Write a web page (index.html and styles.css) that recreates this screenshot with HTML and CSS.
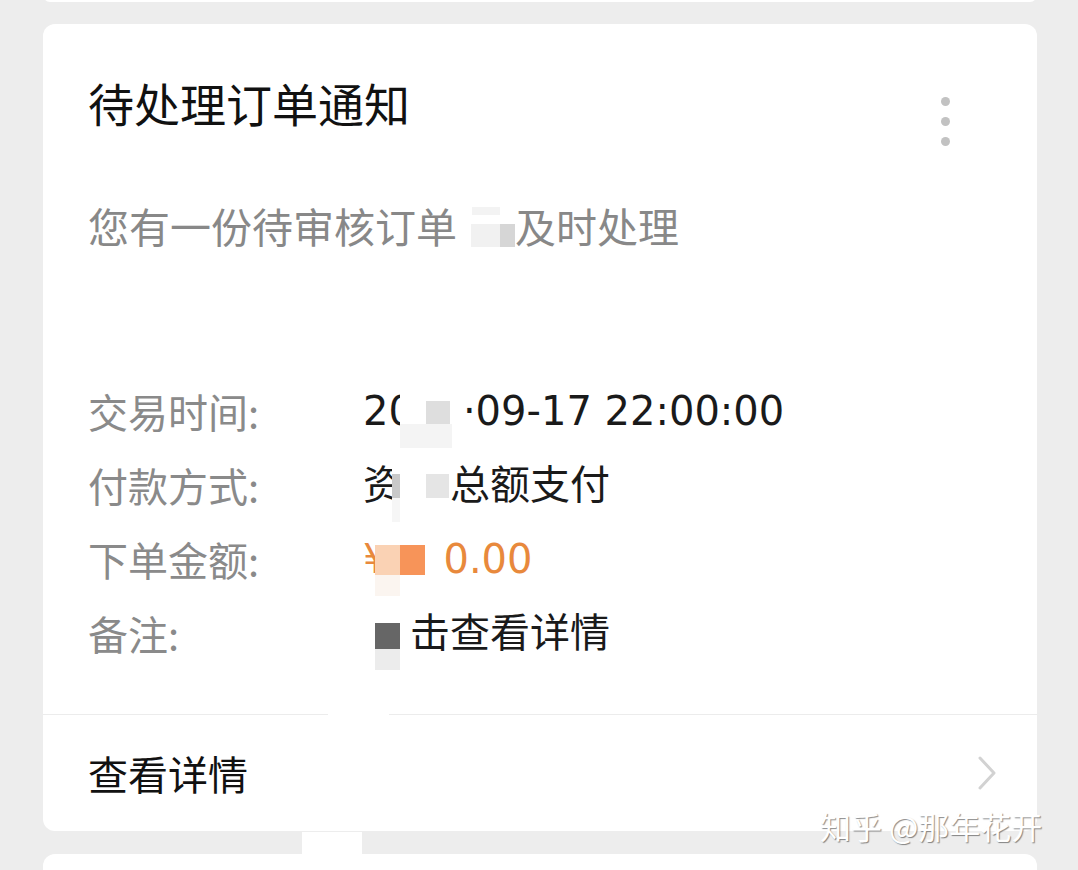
FILE: index.html
```html
<!DOCTYPE html>
<html lang="zh-CN">
<head>
    <meta charset="UTF-8">
    <meta name="viewport" content="width=device-width, initial-scale=1.0">
    <title>待处理订单通知</title>
    <link rel="stylesheet" href="styles.css">
</head>
<body>
    <div class="page">
        <div class="card card-prev"></div>

        <div class="card notice">
            <div class="notice-main">
                <div class="notice-head">
                    <h2 class="notice-title">待处理订单通知</h2>
                    <div class="more"><span></span><span></span><span></span></div>
                </div>
                <p class="notice-desc">您有一份待审核订单<span class="mask mask-desc"></span>及时处理</p>
                <div class="fields">
                    <div class="field">
                        <span class="field-label">交易时间:</span>
                        <span class="field-value">20<span class="mask mask-date"></span>·09-17 22:00:00</span>
                    </div>
                    <div class="field">
                        <span class="field-label">付款方式:</span>
                        <span class="field-value">资<span class="mask mask-pay"></span>总额支付</span>
                    </div>
                    <div class="field">
                        <span class="field-label">下单金额:</span>
                        <span class="field-value amount">¥<span class="mask mask-amount"></span>0.00</span>
                    </div>
                    <div class="field">
                        <span class="field-label">备注:</span>
                        <span class="field-value"><span class="mask mask-note"></span>击查看详情</span>
                    </div>
                </div>
            </div>
            <div class="notice-foot">
                <span>查看详情</span>
                <svg class="chevron" width="20" height="36" viewBox="0 0 20 36">
                    <path d="M3 3 L17 18 L3 33" fill="none" stroke="#d2d2d2" stroke-width="3" stroke-linecap="round" stroke-linejoin="round"/>
                </svg>
            </div>
        </div>

        <div class="card card-next"></div>

        <div class="smear"></div>
        <div class="watermark">知乎 @那年花开</div>
    </div>
</body>
</html>
```

FILE: styles.css
```css
body {
    margin: 0;
    background-color: #ededed;
    font-family: "Noto Sans CJK SC", sans-serif;
}
.page {
    position: relative;
    width: 1078px;
    height: 870px;
    overflow: hidden;
}
.card {
    background-color: #fff;
    margin: 0 41px 0 43px;
    border-radius: 12px;
}
.card-prev {
    height: 14px;
    margin-top: -12px;
}
.notice {
    margin-top: 22px;
}
.card-next {
    margin-top: 23px;
    height: 100px;
}
.notice-main {
    padding: 48px 45px 43px;
}
.notice-head {
    display: flex;
    justify-content: space-between;
    align-items: flex-start;
    height: 60px;
}
.notice-title {
    margin: 0;
    font-size: 46px;
    line-height: 60px;
    font-weight: 400;
    color: #111;
}
.more {
    display: flex;
    flex-direction: column;
    gap: 11px;
    margin: 25px 42px 0 0;
}
.more span {
    width: 9px;
    height: 9px;
    border-radius: 50%;
    background-color: #c2c2c2;
}
.notice-desc {
    margin: 65px 0 0;
    font-size: 41px;
    line-height: 56px;
    color: #888;
}
.fields {
    margin-top: 121px;
}
.field {
    display: flex;
    font-size: 40px;
    line-height: 74px;
}
.field-label {
    flex-shrink: 0;
    width: 275px;
    color: #8a8a8a;
}
.field-value {
    font-family: "DejaVu Sans", "Noto Sans CJK SC", sans-serif;
    color: #1a1a1a;
    white-space: nowrap;
}
.field-value.amount {
    color: #e8893c;
}

/* pixelated blur left in the screenshot */
.mask {
    display: inline-block;
    vertical-align: top;
    height: 74px;
    background-color: #fff;
    background-repeat: no-repeat;
}
.mask-desc {
    width: 58px;
    height: 56px;
    background-image:
        linear-gradient(#f3f3f3, #f3f3f3),
        linear-gradient(#f1f1f1, #f1f1f1),
        linear-gradient(#d6d6d6, #d6d6d6);
    background-position: 15px 10px, 14px 27px, 43px 27px;
    background-size: 28px 8px, 29px 23px, 15px 23px;
}
.mask-date {
    margin-left: -14px;
    width: 63px;
    background-image:
        linear-gradient(#dedede, #dedede),
        linear-gradient(#f4f4f4, #f4f4f4);
    background-position: 26px 27px, 0 50px;
    background-size: 24px 23px, 52px 24px;
}
.mask-pay {
    margin-left: -11px;
    width: 58px;
    background-image:
        linear-gradient(#c9c9c9, #c9c9c9),
        linear-gradient(#e5e5e5, #e5e5e5),
        linear-gradient(#f6f6f6, #f6f6f6);
    background-position: 0 26px, 34px 26px, 0 50px;
    background-size: 8px 24px, 23px 24px, 8px 26px;
}
.mask-amount {
    margin-left: -13px;
    width: 68px;
    background-image:
        linear-gradient(#fad2b4, #fad2b4),
        linear-gradient(#f79459, #f79459),
        linear-gradient(#fbf5f0, #fbf5f0);
    background-position: 0 23px, 25px 23px, 0 53px;
    background-size: 25px 30px, 25px 30px, 25px 22px;
}
.mask-note {
    width: 47px;
    background-image:
        linear-gradient(#666, #666),
        linear-gradient(#ececec, #ececec);
    background-position: 12px 27px, 12px 53px;
    background-size: 25px 26px, 25px 23px;
}

.notice-foot {
    display: flex;
    justify-content: space-between;
    align-items: center;
    height: 118px;
    padding: 0 40px 0 45px;
    box-sizing: border-box;
    border-top: 1px solid transparent;
    background-image: linear-gradient(to right, #ececec 285px, #fff 285px, #fff 346px, #ececec 346px);
    background-size: 100% 1px;
    background-repeat: no-repeat;
    font-size: 40px;
    color: #111;
}
.chevron {
    display: block;
}
.smear {
    position: absolute;
    left: 302px;
    top: 832px;
    width: 60px;
    height: 24px;
    background-color: #fff;
}
.watermark {
    position: absolute;
    left: 820px;
    top: 806px;
    font-size: 31px;
    line-height: 40px;
    color: #fff;
    text-shadow: 1px 1px 1px rgba(0, 0, 0, 0.45);
}
```
